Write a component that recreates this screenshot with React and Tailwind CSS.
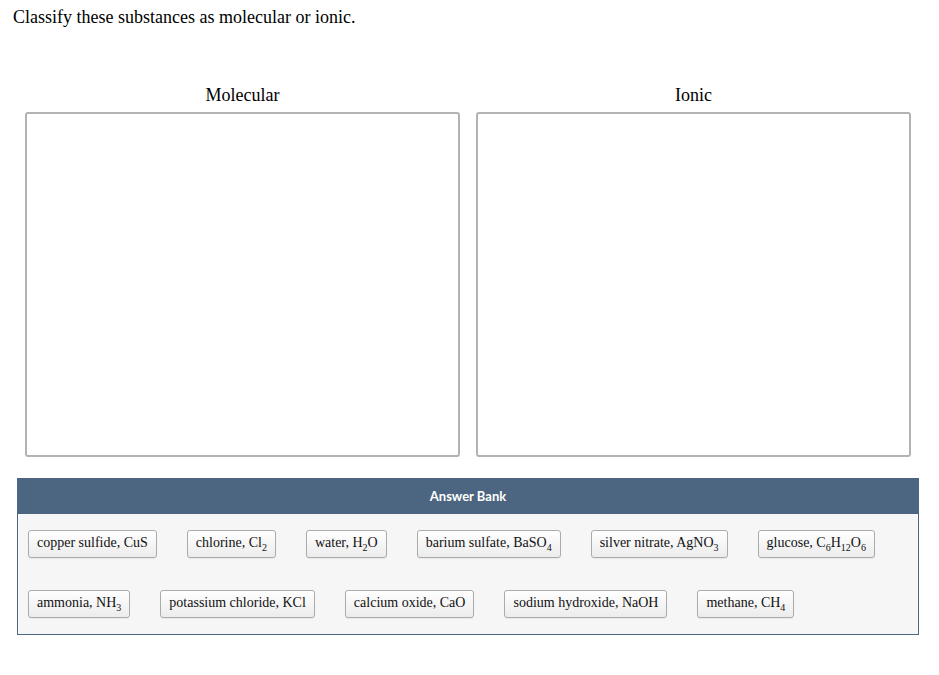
import React from 'react';

const serif = "font-['Liberation_Serif','Times_New_Roman',serif]";

// Answer bank items; formula parts are [text, subscript] pairs
const rowOne = [
  ['copper sulfide, ', [['CuS']]],
  ['chlorine, ', [['Cl', '2']]],
  ['water, ', [['H', '2'], ['O']]],
  ['barium sulfate, ', [['BaSO', '4']]],
  ['silver nitrate, ', [['AgNO', '3']]],
  ['glucose, ', [['C', '6'], ['H', '12'], ['O', '6']]],
];

const rowTwo = [
  ['ammonia, ', [['NH', '3']]],
  ['potassium chloride, ', [['KCl']]],
  ['calcium oxide, ', [['CaO']]],
  ['sodium hydroxide, ', [['NaOH']]],
  ['methane, ', [['CH', '4']]],
];

function Chip({ name, formula }) {
  return (
    <button className={`h-[28px] px-[8px] rounded-[3px] border border-[#ababab] bg-gradient-to-b from-white to-[#ececec] text-[14px] text-[#111] leading-[16px] whitespace-nowrap shadow-[0_1px_1px_rgba(0,0,0,0.06)] ${serif}`}>
      <span className="relative top-[-1px]">
        {name}
        {formula.map(([t, sub], i) => (
          <React.Fragment key={i}>
            {t}
            {sub && <span className="text-[10px] leading-none relative top-[4px]">{sub}</span>}
          </React.Fragment>
        ))}
      </span>
    </button>
  );
}

function DropZone({ title }) {
  return (
    <div className="flex-1 flex flex-col">
      <div className={`text-center text-[18px] text-black h-[26px] leading-[18px] ${serif}`}>{title}</div>
      <div className="h-[345px] border-2 border-[#b3b3b3] rounded-[3px] bg-white" />
    </div>
  );
}

export default function App() {
  return (
    <div className="w-[939px] h-[675px] bg-white">
      <p className={`pl-[13px] pt-[8px] text-[18px] text-black leading-[18px] ${serif}`}>
        Classify these substances as molecular or ionic.
      </p>

      <div className="flex gap-[16px] pl-[25px] pr-[28px] mt-[60px]">
        <DropZone title="Molecular" />
        <DropZone title="Ionic" />
      </div>

      <div className="ml-[17px] mr-[20px] mt-[21px] border border-[#4c6580]">
        <div className="h-[35px] bg-[#4c6580] flex items-center justify-center text-white text-[13px] font-bold font-['Lato','Open_Sans',sans-serif]">
          Answer Bank
        </div>
        <div className="bg-[#f6f6f6] px-[10px] pt-[16px] pb-[16px] flex flex-col gap-[32px]">
          <div className="flex items-center gap-[30px]">
            {rowOne.map(([n, f]) => <Chip key={n} name={n} formula={f} />)}
          </div>
          <div className="flex items-center gap-[30px]">
            {rowTwo.map(([n, f]) => <Chip key={n} name={n} formula={f} />)}
          </div>
        </div>
      </div>
    </div>
  );
}
